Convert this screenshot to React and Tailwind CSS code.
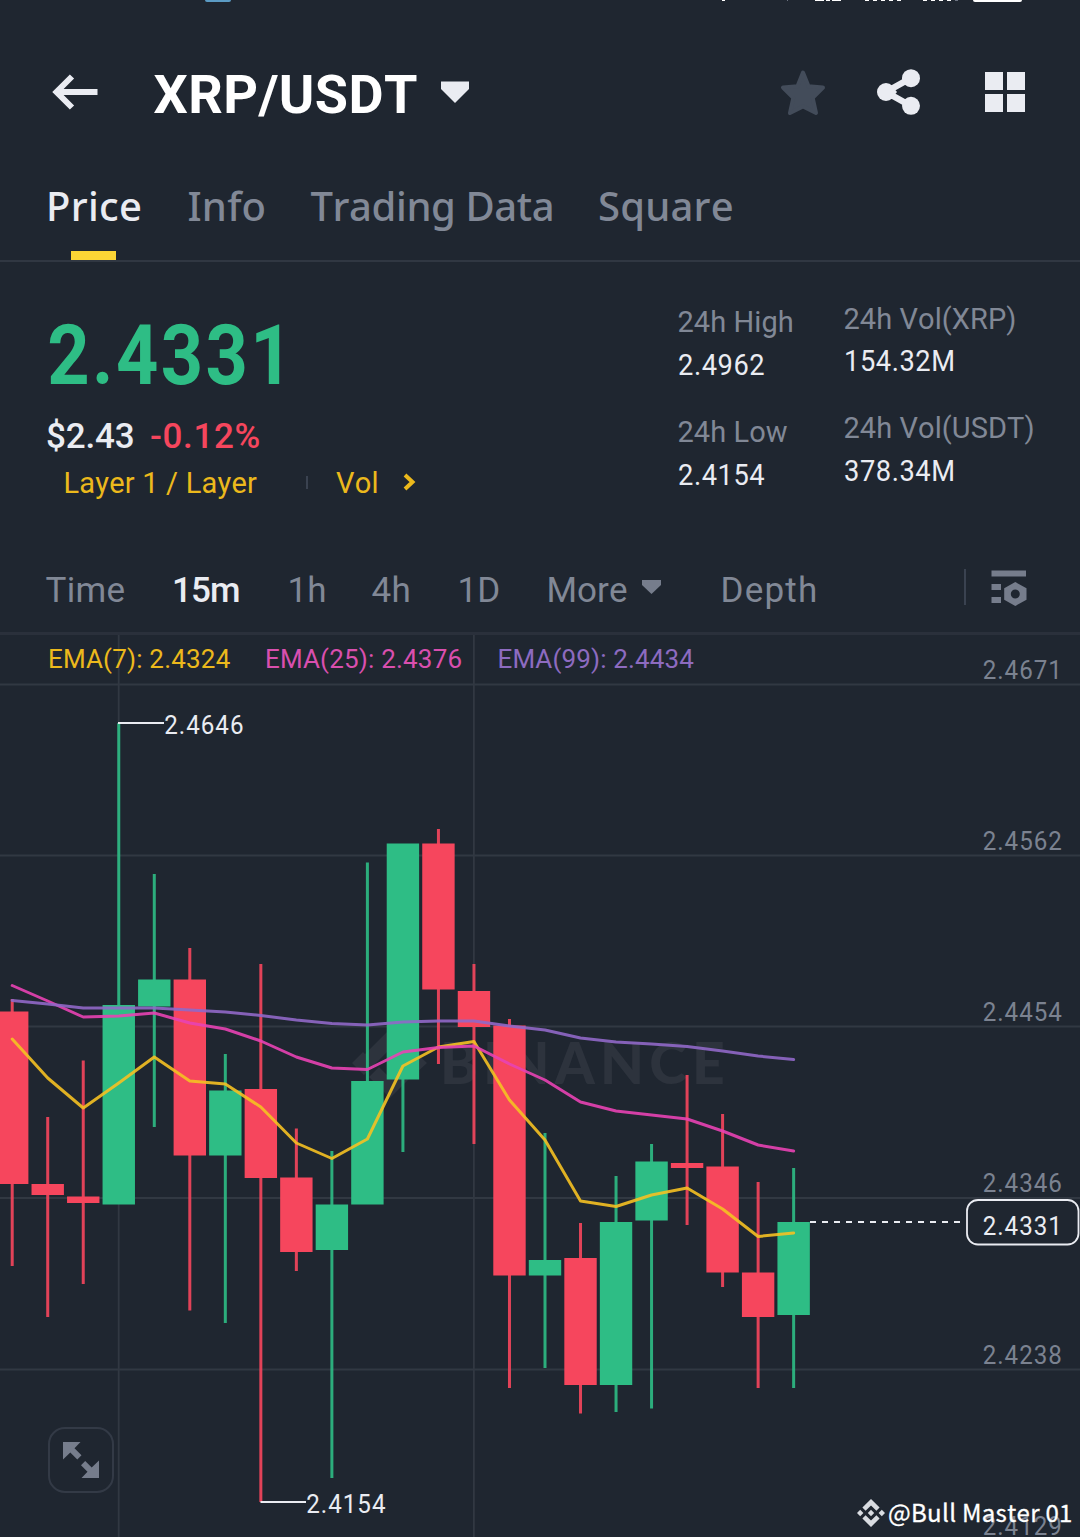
const RED = "#f6465d";
const GREEN = "#2ebd85";

// [direction, body top, body bottom, wick top, wick bottom]
const candles = [
  ["r", 1011.5, 1184, 999, 1266],
  ["r", 1184, 1195, 1117, 1317],
  ["r", 1196.5, 1203, 1060.5, 1284],
  ["g", 1005, 1204.5, 723, 1204],
  ["g", 979.5, 1006.5, 874, 1127],
  ["r", 979.5, 1155.5, 948, 1310.5],
  ["g", 1090.5, 1155.5, 1054, 1323],
  ["r", 1089, 1178, 964, 1502],
  ["r", 1177.5, 1252, 1128.5, 1271],
  ["g", 1204.5, 1250, 1151, 1478],
  ["g", 1081, 1204.5, 862.5, 1204],
  ["g", 843.5, 1079.5, 844, 1152],
  ["r", 843.5, 989.5, 829, 1064],
  ["r", 991, 1027, 964, 1144],
  ["r", 1025.5, 1275.5, 1019, 1388],
  ["g", 1260, 1275.5, 1133, 1368],
  ["r", 1258, 1385, 1223, 1413.5],
  ["g", 1222, 1385, 1176, 1412],
  ["g", 1161.5, 1220.5, 1144, 1408.5],
  ["r", 1163, 1168, 1075, 1225],
  ["r", 1166.5, 1272.5, 1114, 1287],
  ["r", 1272.5, 1317, 1182, 1388],
  ["g", 1222, 1315, 1168, 1388],
];

const ema7 = [1039, 1078, 1108, 1083, 1057, 1081, 1084, 1107, 1143, 1158.5, 1139, 1066, 1047, 1041.5, 1100, 1140, 1201, 1206.5, 1195, 1188, 1209, 1236.5, 1233];
const ema25 = [985.5, 1001, 1017, 1016, 1013, 1023, 1029, 1041, 1057, 1068, 1069.5, 1052, 1047.5, 1046, 1064, 1080, 1102, 1111, 1115, 1119, 1131, 1145, 1151];
const ema99 = [1000.5, 1004, 1008, 1008, 1008, 1010, 1012, 1015.5, 1020, 1023.5, 1025, 1022, 1021, 1021, 1026, 1030, 1038, 1042, 1044, 1046.5, 1051, 1056, 1059.5];

const cx = (i) => 12.2 + i * 35.52;
const points = (values) => values.map((y, i) => `${cx(i)},${y}`).join(" ");

const gridRows = [684.5, 855.5, 1026.5, 1198, 1369.5];
const axisLabels = [
  ["2.4671", 679],
  ["2.4562", 850],
  ["2.4454", 1021],
  ["2.4346", 1192],
  ["2.4238", 1364],
  ["2.4129", 1535],
];

function StatusBar() {
  return (
    <div className="flex h-[3px] items-start">
      <div className="ml-[205px] h-[2px] w-[26px] rounded-b-full bg-[#5b9bc4]" />
      <div className="ml-[491px] h-px w-[3px] bg-white" />
      <div className="ml-[62px] h-px w-px bg-[#6b7280]" />
      <div className="ml-[27px] flex gap-[2px]">
        <div className="h-px w-[9px] bg-white" />
        <div className="h-px w-[4px] bg-white" />
        <div className="h-px w-[9px] bg-white" />
      </div>
      <div className="ml-[24px] flex gap-[4px]">
        <div className="h-px w-[4px] bg-white" />
        <div className="h-px w-[4px] bg-white" />
        <div className="h-px w-[4px] bg-white" />
        <div className="h-px w-[4px] bg-white" />
        <div className="h-px w-[4px] bg-white" />
      </div>
      <div className="ml-[22px] flex gap-[4px]">
        <div className="h-px w-[4px] bg-white" />
        <div className="h-px w-[4px] bg-white" />
        <div className="h-px w-[4px] bg-white" />
        <div className="h-px w-[4px] bg-white" />
        <div className="h-px w-[3px] bg-[#6b7280]" />
      </div>
      <div className="ml-[15px] h-[1.5px] w-[49px] rounded-b-full bg-white" />
    </div>
  );
}

function Header() {
  return (
    <header className="flex h-[178px] items-center pl-[52px]">
      <svg className="h-[36px] w-[46px]" viewBox="0 0 46 36" fill="none" stroke="#eaecf2" strokeWidth="6">
        <path d="M45.500 18H5M20 2.500L4.500 18 20 33.500" />
      </svg>
      <h1 className="ml-[55.600px] w-[264px] pt-[5px] text-[54px] leading-[54px] font-bold tracking-[0.39px] text-white">XRP/USDT</h1>
      <svg className="ml-[23.400px] h-[22px] w-[28px]" viewBox="0 0 28 22" fill="#eaecf2">
        <path d="M0 0.500h28v7.500L14 22 0 8z" />
      </svg>
      <svg className="ml-[311px] h-[47px] w-[46px]" viewBox="0 0 46 47" fill="#434c5a" stroke="#434c5a" strokeWidth="4" strokeLinejoin="round">
        <path d="M23 3.500l5.500 13.700 14.500 1.300-10.300 10.300 3.300 15.200L23 37.500l-13 6.500 3.300-15.200L3 18.500l14.500-1.300z" />
      </svg>
      <svg className="ml-[51px] h-[46px] w-[44px]" viewBox="0 0 44 46" fill="#eaecf2">
        <path d="M34 9L9 23l25 14" fill="none" stroke="#eaecf2" strokeWidth="6.500" />
        <path d="M9 17h6l5 6-5 6H9z" />
        <circle cx="9" cy="23" r="9" />
        <circle cx="34" cy="9.200" r="9" />
        <circle cx="34" cy="36.800" r="9" />
      </svg>
      <div className="ml-[64px] grid h-[40px] w-[40px] grid-cols-2 gap-[4.500px]">
        <div className="bg-[#eaecf2]" />
        <div className="bg-[#eaecf2]" />
        <div className="bg-[#eaecf2]" />
        <div className="bg-[#eaecf2]" />
      </div>
    </header>
  );
}

function Tabs() {
  return (
    <nav className="flex h-[81px] border-b-2 border-[#303742] pl-[46px] font-['Noto_Sans'] text-[40px] leading-[50px] font-medium text-[#818896]">
      <div className="relative w-[141.500px] tracking-[0.3px] text-[#eaecf2]">
        Price
        <div className="absolute bottom-0 left-[25px] h-[9px] w-[45px] bg-[#fcd535]" />
      </div>
      <div className="w-[123px] tracking-[0.2px]">Info</div>
      <div className="w-[287.500px] tracking-[-0.4px]">Trading Data</div>
      <div className="tracking-[0.2px]">Square</div>
    </nav>
  );
}

function Stat({ label, value }) {
  return (
    <div className="text-[29px] leading-[30px]">
      <div className="tracking-[0.07px] text-[#818896]">{label}</div>
      <div className="mt-[12.500px] origin-left scale-x-[0.94] tracking-[0.6px] text-[#eaecf2]">{value}</div>
    </div>
  );
}

function Summary() {
  return (
    <section className="flex h-[288px]">
      <div className="w-[677.500px] pt-[52px] pl-[46px]">
        <div className="origin-left scale-x-[0.88] pl-[1.500px] text-[84px] leading-[84px] font-bold tracking-[2.700px] text-[#2ebd85]">2.4331</div>
        <div className="mt-[19px] flex text-[35px] leading-[40px] font-medium">
          <span className="w-[104px] tracking-[-0.15px] text-[#eaecf2]">$2.43</span>
          <span className="tracking-[0.64px] text-[#f6465d]">-0.12%</span>
        </div>
        <div className="mt-[11px] flex h-[30px] items-center text-[29px] leading-[30px] text-[#ecb91c]">
          <span className="w-[260px] pl-[17.500px] tracking-[0.2px]">Layer 1 / Layer</span>
          <span className="mb-[2px] h-[13px] w-[2px] bg-[#3a4250]" />
          <span className="w-[95px] pl-[28px] tracking-[0.3px]">Vol</span>
          <svg className="mb-[2px] h-[18px] w-[13px]" viewBox="0 0 13 18" fill="none" stroke="#ecb91c" strokeWidth="4">
            <path d="M2 2l7.500 7L2 16" />
          </svg>
        </div>
      </div>
      <div className="flex w-[166px] flex-col gap-[37.500px] pt-[45px]">
        <Stat label="24h High" value="2.4962" />
        <Stat label="24h Low" value="2.4154" />
      </div>
      <div className="flex flex-col gap-[37px] pt-[41.500px] whitespace-nowrap">
        <Stat label="24h Vol(XRP)" value="154.32M" />
        <Stat label="24h Vol(USDT)" value="378.34M" />
      </div>
    </section>
  );
}

function Intervals() {
  return (
    <nav className="flex h-[85px] items-center border-b-[3px] border-[#2a303b] pl-[45.500px] text-[35px] leading-[40px] text-[#818896]">
      <div className="w-[126.500px] tracking-[0.3px]">Time</div>
      <div className="w-[115.500px] font-medium tracking-[-0.9px] text-[#eaecf2]">15m</div>
      <div className="w-[84px] tracking-[0.1px]">1h</div>
      <div className="w-[86px] tracking-[0.3px]">4h</div>
      <div className="w-[89px]">1D</div>
      <div className="flex w-[174px] items-center">
        <span className="w-[95px]">More</span>
        <svg className="mb-[8px] h-[14px] w-[19px]" viewBox="0 0 19 14" fill="#767d8c">
          <path d="M0 0h19v5l-9.500 9L0 5z" />
        </svg>
      </div>
      <div className="w-[243px] tracking-[1.2px]">Depth</div>
      <div className="mb-[8px] h-[36px] w-[2px] bg-[#3a4250]" />
      <svg className="mb-[6px] ml-[25px] h-[36px] w-[36px]" viewBox="0 0 36 36" fill="#767d8c">
        <path d="M0.500 0.500h34.500v6H0.500zM0.500 14H10v6H0.500zM0.500 27H10v6H0.500z" />
        <path fillRule="evenodd" d="M24.300 12L35.500 18.300v11.400L24.300 36 13.200 29.700V18.300zM24.300 19.500a4.500 4.500 0 100 9 4.500 4.500 0 000-9z" />
      </svg>
    </nav>
  );
}

function PriceText({ x, y, fill, children }) {
  return (
    <text transform={`translate(${x} ${y}) scale(0.93 1)`} fill={fill} className="tracking-[1.050px]">
      {children}
    </text>
  );
}

function Chart() {
  return (
    <svg className="block h-[902px] w-[1080px] font-['Roboto',sans-serif] text-[26px]" viewBox="0 635 1080 902">
      <g stroke="#313842" strokeWidth="1.800">
        {gridRows.map((y) => (
          <path key={y} d={`M0 ${y}H1080`} />
        ))}
        <path d="M118.700 635V1537M473.900 635V1537" />
      </g>

      <g fill="#2d333d">
        <path d="M390 1029l21 21-10 10-11-11-26 26-10-10zM352 1063l11-11 11 11-11 11zM404 1063l11-11 12 11-12 11zM390 1098l-21-21 10-10 11 11 11-11 10 10z" />
        <text x="440" y="1084" className="font-['Lato'] text-[57px] font-black tracking-[5.2px]">BINANCE</text>
      </g>

      {candles.map(([dir, top, bottom, high, low], i) => (
        <g key={i} fill={dir === "g" ? GREEN : RED}>
          <rect x={cx(i) - 1.5} y={high} width="3" height={low - high} opacity="0.9" />
          <rect x={cx(i) - 16.2} y={top} width="32.400" height={bottom - top} />
        </g>
      ))}

      <g fill="none" strokeWidth="3" strokeLinejoin="round" strokeLinecap="round">
        <polyline points={points(ema7)} stroke="#f5c122" opacity="0.9" />
        <polyline points={points(ema25)} stroke="#e843b4" opacity="0.9" />
        <polyline points={points(ema99)} stroke="#9068c8" opacity="0.9" />
      </g>

      <g fill="none" stroke="#eaecf2" strokeWidth="1.800">
        <path d="M118 723H164M260.500 1502H306" />
        <path d="M810 1222H966" strokeDasharray="6 6" />
      </g>
      <PriceText x={164.3} y={734} fill="#eaecf2">2.4646</PriceText>
      <PriceText x={306.3} y={1513} fill="#eaecf2">2.4154</PriceText>

      {axisLabels.map(([label, y]) => (
        <PriceText key={label} x={982.7} y={y} fill="#7b8290">{label}</PriceText>
      ))}
      <rect x="967" y="1200" width="111.500" height="44.500" rx="11" fill="#1f2630" stroke="#eaecf2" strokeWidth="1.800" />
      <PriceText x={982.7} y={1235} fill="#eaecf2">2.4331</PriceText>
    </svg>
  );
}

export default function App() {
  return (
    <div className="h-[1537px] w-[1080px] overflow-hidden bg-[#1f2630] font-['Roboto',sans-serif] [font-kerning:none]">
      <StatusBar />
      <Header />
      <Tabs />
      <Summary />
      <Intervals />
      <section className="relative h-[902px]">
        <Chart />
        <div className="absolute top-[9px] left-[48px] flex text-[26px] leading-[30px] whitespace-nowrap">
          <span className="w-[217px] tracking-[0.2px] text-[#ecb91c]">EMA(7): 2.4324</span>
          <span className="w-[232.600px] tracking-[0.2px] text-[#d94fae]">EMA(25): 2.4376</span>
          <span className="tracking-[0.15px] text-[#8d6bc0]">EMA(99): 2.4434</span>
        </div>
        <div className="absolute top-[792px] left-[48px] flex h-[66px] w-[66px] items-center justify-center rounded-[17px] border-[2.500px] border-[#333a46] bg-[#1f2630]">
          <svg className="h-[37px] w-[37px]" viewBox="0 0 37 37" fill="#767d8c">
            <path d="M0 0h17.500L11.500 6.300l7 7-4.200 4.200-7-7L0 17.500zM36 36H18.500l6-6.300-6.500-6.500 4.200-4.200 6.500 6.500 7.300-7z" />
          </svg>
        </div>
        <div className="absolute top-[863px] left-[857px] flex h-[30px] items-center whitespace-nowrap text-white">
          <svg className="h-[28px] w-[28px]" viewBox="0 0 28 28" fill="#d9dce1">
            <path d="M14 0l8.600 8.600-3.200 3.200L14 6.400l-5.400 5.400-3.200-3.200zM3.200 10.800L6.400 14l-3.200 3.200L0 14zM24.800 10.800L28 14l-3.200 3.200-3.200-3.200zM14 10.800l3.200 3.200-3.200 3.200-3.200-3.200zM14 28l-8.600-8.600 3.200-3.200 5.400 5.400 5.400-5.400 3.200 3.200z" />
          </svg>
          <span className="mb-[2px] ml-[3px] font-['Noto_Sans_CJK_SC',sans-serif] text-[24px] leading-[30px] font-normal tracking-[0.32px] [-webkit-text-stroke:0.3px_white]">@Bull Master 01</span>
        </div>
      </section>
    </div>
  );
}
